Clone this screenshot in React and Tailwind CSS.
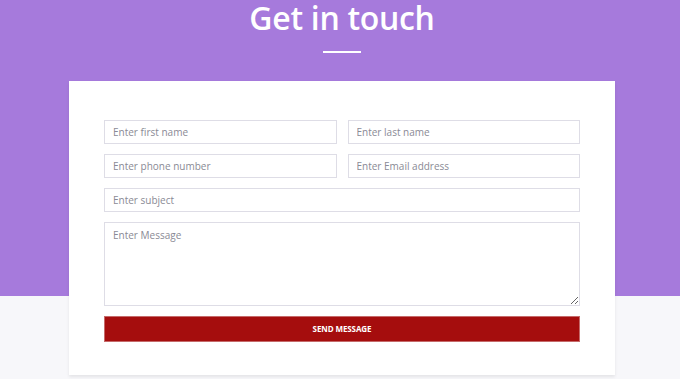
export default function App() {
  const inputCls =
    "h-[24px] w-full border border-[#dedde6] bg-white px-[8px] text-[10px] text-[#555] placeholder:text-[#8a8a95] outline-none";
  return (
    <div
      className="h-[379px] w-[680px] overflow-hidden bg-[linear-gradient(to_bottom,#a67adc_296px,#f7f7fa_296px)]"
      style={{ fontFamily: '"Open Sans", "Noto Sans", sans-serif' }}
    >
      <div className="ml-[69px] flex w-[546px] flex-col items-center">
        <h1 className="text-[32px] font-semibold leading-[36px] tracking-[-0.3px] text-white">
          Get in touch
        </h1>
        <div className="mt-[15px] h-[2px] w-[38px] bg-white" />
        <div className="mt-[28px] flex w-full flex-col gap-[10px] bg-white px-[35px] pb-[33px] pt-[39px] shadow-[0_2px_3px_rgba(0,0,0,0.08)]">
          <div className="grid grid-cols-2 gap-x-[11px] gap-y-[10px]">
            <input className={inputCls} placeholder="Enter first name" />
            <input className={inputCls} placeholder="Enter last name" />
            <input className={inputCls} placeholder="Enter phone number" />
            <input className={inputCls} placeholder="Enter Email address" />
          </div>
          <input className={inputCls} placeholder="Enter subject" />
          <textarea
            className="block h-[84px] w-full resize-y border border-[#dedde6] bg-white px-[8px] py-[5px] text-[10px] text-[#555] placeholder:text-[#8a8a95] outline-none"
            placeholder="Enter Message"
          />
          <button className="h-[26px] w-full border border-[#c56a6a] bg-[#a50d0d] text-[8px] font-bold tracking-[-0.1px] text-white">
            SEND MESSAGE
          </button>
        </div>
      </div>
    </div>
  );
}
